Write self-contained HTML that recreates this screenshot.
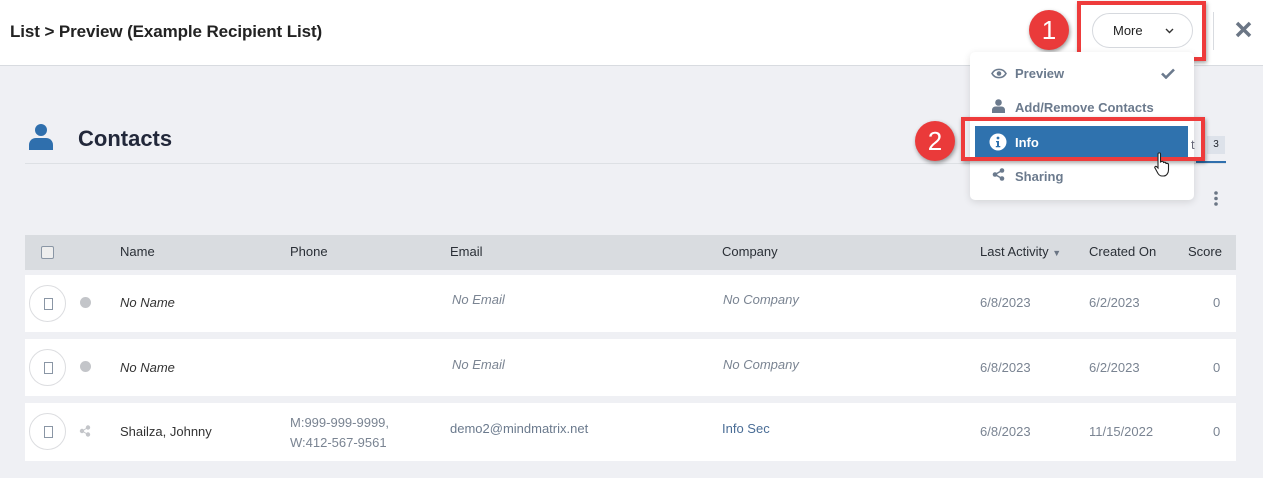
<!DOCTYPE html>
<html><head><meta charset="utf-8"><style>
*{box-sizing:border-box;margin:0;padding:0}
body{width:1263px;height:478px;overflow:hidden;background:#eff0f4;font-family:"Liberation Sans",sans-serif;position:relative;color:#22262e}
.abs{position:absolute}
.hdr{left:0;top:0;width:1263px;height:66px;background:#fff;border-bottom:1px solid #d8dbe0}
.title{left:10px;top:22px;font-size:17px;font-weight:bold;color:#222;letter-spacing:-0.1px}
.more{left:1092px;top:13px;width:101px;height:35px;border:1px solid #d6d9de;border-radius:18px;background:#fff;font-size:13px;color:#222}
.red{border:4px solid #ee3b3b;box-shadow:1px 2px 4px rgba(0,0,0,.35)}
.badge{width:40px;height:40px;border-radius:50%;background:#ea3a3a;color:#fff;font-size:26px;text-align:center;line-height:40px;box-shadow:1px 2px 4px rgba(0,0,0,.4)}
.menu{left:970px;top:52px;width:224px;height:148px;background:#fff;border-radius:5px;box-shadow:0 2px 8px rgba(0,0,0,.12)}
.mi{left:20px;font-size:13px;font-weight:bold;color:#6b7a8d}
.tbl{left:25px;width:1211px;background:#fff}
.th{top:235px;height:35px;background:#d9dce0;font-size:13px;color:#2a2f36}
.cell{position:absolute;font-size:13px}
.ck{left:4px;width:37px;height:37px;border:1px solid #dcdde0;border-radius:50%}
.ck:after{content:"";position:absolute;left:14px;top:12px;width:7px;height:10px;border:1px solid #8a96a5}
.it{font-style:italic;color:#7a8492}
.g{color:#7a8492}
</style></head><body>
<div class="abs hdr"></div>
<div class="abs title">List &gt; Preview (Example Recipient List)</div>
<div class="abs more"><span class="abs" style="left:20px;top:9px">More</span>
<svg class="abs" style="left:72px;top:14px" width="9" height="6" viewBox="0 0 9 6"><path d="M1 1l3.5 3.5L8 1" stroke="#333" stroke-width="1.4" fill="none"/></svg></div>
<div class="abs red" style="left:1077px;top:1px;width:129px;height:60px"></div>
<div class="abs" style="left:1213px;top:12px;width:1px;height:38px;background:#d8dbe0"></div>
<svg class="abs" style="left:1235px;top:21px" width="17" height="17" viewBox="0 0 17 17"><path d="M2 2l13 13M15 2L2 15" stroke="#6b7685" stroke-width="3.5"/></svg>
<div class="abs badge" style="left:1029px;top:10px">1</div>

<svg class="abs" style="left:29px;top:123px" width="24" height="27" viewBox="0 0 24 27"><circle cx="12" cy="7" r="6" fill="#2f6fad"/><path d="M0 27v-5c0-4 3-7 7-7h10c4 0 7 3 7 7v5z" fill="#2f6fad"/></svg>
<div class="abs" style="left:78px;top:126px;font-size:22px;font-weight:bold;color:#22283a">Contacts</div>
<div class="abs" style="left:25px;top:163px;width:1201px;height:1px;background:#dde0e4"></div>
<div class="abs" style="left:1207px;top:136px;width:18px;height:18px;background:#dde2ea;font-size:10px;text-align:center;line-height:18px">3</div>
<div class="abs" style="left:1196px;top:161px;width:30px;height:2px;background:#2f6fad"></div>
<svg class="abs" style="left:1213px;top:191px" width="6" height="15" viewBox="0 0 6 15"><circle cx="3" cy="2" r="1.8" fill="#6b7685"/><circle cx="3" cy="7.5" r="1.8" fill="#6b7685"/><circle cx="3" cy="13" r="1.8" fill="#6b7685"/></svg>

<div class="abs tbl th">
<div class="cell" style="left:16px;top:11px;width:13px;height:13px;border:1px solid #8a96a5;border-radius:2px;background:#eee"></div>
<div class="cell" style="left:95px;top:9px">Name</div>
<div class="cell" style="left:265px;top:9px">Phone</div>
<div class="cell" style="left:425px;top:9px">Email</div>
<div class="cell" style="left:697px;top:9px">Company</div>
<div class="cell" style="left:955px;top:9px">Last Activity <span style="color:#6b7685;font-size:9px">&#9660;</span></div>
<div class="cell" style="left:1064px;top:9px">Created On</div>
<div class="cell" style="left:1163px;top:9px">Score</div>
</div>

<div class="abs tbl" style="top:275px;height:57px">
<div class="cell ck" style="top:10px"></div>
<div class="cell" style="left:55px;top:22px;width:11px;height:11px;border-radius:50%;background:#c3c5c9"></div>
<div class="cell it" style="left:95px;top:20px;color:#333">No Name</div>
<div class="cell it" style="left:427px;top:17px">No Email</div>
<div class="cell it" style="left:698px;top:17px">No Company</div>
<div class="cell g" style="left:955px;top:20px">6/8/2023</div>
<div class="cell g" style="left:1064px;top:20px">6/2/2023</div>
<div class="cell g" style="left:1188px;top:20px">0</div>
</div>
<div class="abs tbl" style="top:339px;height:57px">
<div class="cell ck" style="top:10px"></div>
<div class="cell" style="left:55px;top:22px;width:11px;height:11px;border-radius:50%;background:#c3c5c9"></div>
<div class="cell it" style="left:95px;top:21px;color:#333">No Name</div>
<div class="cell it" style="left:427px;top:18px">No Email</div>
<div class="cell it" style="left:698px;top:18px">No Company</div>
<div class="cell g" style="left:955px;top:21px">6/8/2023</div>
<div class="cell g" style="left:1064px;top:21px">6/2/2023</div>
<div class="cell g" style="left:1188px;top:21px">0</div>
</div>
<div class="abs tbl" style="top:403px;height:58px">
<div class="cell ck" style="top:10px"></div>
<svg class="cell" style="left:54px;top:22px" width="12" height="12" viewBox="0 0 12 12"><circle cx="9" cy="2.5" r="2.2" fill="#c3c5c9"/><circle cx="3" cy="6" r="2.2" fill="#c3c5c9"/><circle cx="9" cy="9.5" r="2.2" fill="#c3c5c9"/><path d="M9 2.5L3 6l6 3.5" stroke="#c3c5c9" fill="none"/></svg>
<div class="cell" style="left:95px;top:21px;color:#333">Shailza, Johnny</div>
<div class="cell g" style="left:265px;top:10px;line-height:20px">M:999-999-9999,<br>W:412-567-9561</div>
<div class="cell g" style="left:425px;top:18px;color:#6b7a8d">demo2@mindmatrix.net</div>
<div class="cell" style="left:697px;top:18px;color:#4a6d96">Info Sec</div>
<div class="cell g" style="left:955px;top:21px">6/8/2023</div>
<div class="cell g" style="left:1064px;top:21px">11/15/2022</div>
<div class="cell g" style="left:1188px;top:21px">0</div>
</div>

<div class="abs menu">
<svg class="abs" style="left:21px;top:16px" width="16" height="11" viewBox="0 0 16 11"><path d="M1 5.5C4 0 12 0 15 5.5C12 11 4 11 1 5.5z" fill="none" stroke="#6b7a8d" stroke-width="1.6"/><circle cx="8" cy="5.5" r="2.3" fill="#6b7a8d"/></svg>
<div class="abs mi" style="left:45px;top:14px">Preview</div>
<svg class="abs" style="left:191px;top:16px" width="14" height="11" viewBox="0 0 14 11"><path d="M1 5.5l4 4L13 1.5" stroke="#6b7a8d" stroke-width="2.6" fill="none"/></svg>
<svg class="abs" style="left:22px;top:47px" width="13" height="14" viewBox="0 0 13 14"><circle cx="6.5" cy="3.5" r="3.3" fill="#6b7a8d"/><path d="M0 14v-3c0-2 1.5-3.5 3.5-3.5h6c2 0 3.5 1.5 3.5 3.5v3z" fill="#6b7a8d"/></svg>
<div class="abs mi" style="left:45px;top:48px">Add/Remove Contacts</div>
<svg class="abs" style="left:22px;top:116px" width="13" height="13" viewBox="0 0 13 13"><circle cx="10" cy="2.5" r="2.3" fill="#6b7a8d"/><circle cx="3" cy="6.5" r="2.3" fill="#6b7a8d"/><circle cx="10" cy="10.5" r="2.3" fill="#6b7a8d"/><path d="M10 2.5L3 6.5l7 4" stroke="#6b7a8d" stroke-width="1.4" fill="none"/></svg>
<div class="abs mi" style="left:45px;top:117px">Sharing</div>
</div>
<div class="abs" style="left:975px;top:126px;width:213px;height:33px;background:#2f72ae"></div>
<svg class="abs" style="left:989px;top:133px" width="18" height="18" viewBox="0 0 18 18"><circle cx="9" cy="9" r="8.5" fill="#fff"/><circle cx="9" cy="5" r="1.4" fill="#2f72ae"/><path d="M7 8h3v5h1.3v1.3H6.8V13H8V9.3H7z" fill="#2f72ae"/></svg>
<div class="abs" style="left:1015px;top:135px;font-size:13px;font-weight:bold;color:#fff">Info</div>
<div class="abs red" style="left:961px;top:117px;width:244px;height:44px"></div>
<div class="abs" style="left:1191px;top:137px;font-size:13px;color:#667">t</div>
<div class="abs badge" style="left:915px;top:121px">2</div>
<svg class="abs" style="left:1153px;top:152px" width="20" height="26" viewBox="0 0 20 26"><path d="M5 2c0-1.5 2.5-1.5 2.5 0v8l1-0.5c1-.5 2 0 2 1l1-.3c1 0 1.5.5 1.5 1.3l1-.2c1 0 1.5.7 1.5 1.5V18c0 3-2 6-5 6H9c-2 0-3-1-4-2.5L2 16c-.7-1 .5-2.2 1.5-1.5L5 16z" fill="#fff" stroke="#222" stroke-width="1.1"/></svg>
</body></html>
